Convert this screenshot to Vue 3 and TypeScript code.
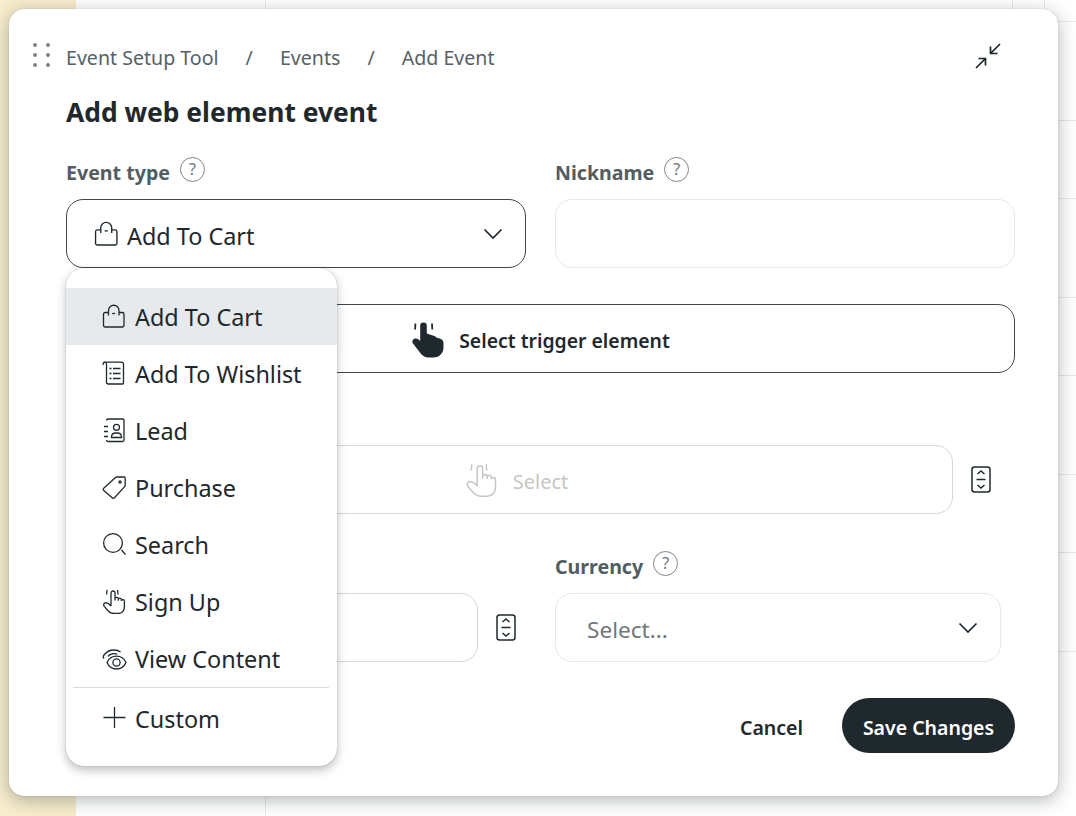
<script setup lang="ts">
interface IconDef { paths: string[]; dots?: [number, number, number][] }

const icons: Record<string, IconDef> = {
  bag: { paths: [
    'M6.5 8.5H3.2A1.7 1.7 0 0 0 1.5 10.2V21.3A1.7 1.7 0 0 0 3.2 23H20.3A1.7 1.7 0 0 0 22 21.3V10.2A1.7 1.7 0 0 0 20.3 8.5H17',
    'M6.5 11.5V6.5a5.2 5.2 0 0 1 10.5 0v5',
    'M10.2 9.5h3'
  ] },
  list: { paths: [
    'M1.5 1.2H19.5A2 2 0 0 1 21.5 3.2V22a1 1 0 0 1-1 1H6.5a2 2 0 0 1-2-2V3.2A2 2 0 0 0 2.6 1.2a1.6 1.6 0 0 0-1.1 2.6',
    'M11 7.5h7.5M11 12.5h7.5M11 17.5h7.5',
    'M7.5 7.5h2M7.5 12.5h2M7.5 17.5h2'
  ] },
  lead: { paths: [
    'M4.5 2.5a1.5 1.5 0 0 1 1.5-1.5H20.5a1.5 1.5 0 0 1 1.5 1.5V22a1.5 1.5 0 0 1-1.5 1.5H6a1.5 1.5 0 0 1-1.5-1.5',
    'M2 8.5h4M2 13.5h4M2 18.5h4',
    'M9.5 19.5v-1.2a4 4 0 0 1 4-3.3h2a4 4 0 0 1 4 3.3v1.2z'
  ], dots: [[14.5, 9.3, 3]] },
  tag: { paths: [
    'M1.7 13.2 13.5 2.6A2 2 0 0 1 14.9 2H22.2a1 1 0 0 1 1 1V10.2a2 2 0 0 1-.6 1.4L12.5 22.8a1.5 1.5 0 0 1-2.1.1L1.6 15.3a1.4 1.4 0 0 1 .1-2.1z'
  ], dots: [[18, 7, 1.1]] },
  search: { paths: ['M19.5 18 23.5 22.5'], dots: [[11, 11, 9.4]] },
  hand: { paths: [
    'M5 1 4.6 5.5M15.6 1 16 5.5',
    'M9 17V4a2 2 0 0 1 4 0V11.5M13 11.5V9.7a1.7 1.7 0 0 1 3.3 0v2M16.3 11.7V10.3a1.6 1.6 0 0 1 3.1 0V11.8M19.4 12a1.5 1.5 0 0 1 3 .2V18c0 3.5-2.6 6.5-6 6.5H12c-2.6 0-4.3-1-6-2.8L2.3 17.4c-1.3-1.6-.5-3.3 1-3.6 1.6-.3 4.1 1.2 5.7 3.2'
  ] },
  eye: { paths: [
    'M5 16.5C7 12 10 10.2 14.5 10.2S22 12 24 16.5C22 21 19 23 14.5 23S7 21 5 16.5z',
    'M2.2 12.5C.9 11.6.9 10.4 2 9 4.6 5.6 8 4 12 4c2.6 0 4.7.7 6.6 2',
    'M6 10.5C7.2 8.7 9.5 7.6 12 7.6c1.2 0 2.3.2 3.2.6'
  ], dots: [[14.5, 16.5, 3.6]] },
  plus: { paths: ['M12.5 1V22M1.5 11.5H23.5'] }
}

const menu = [
  { label: 'Add To Cart', icon: 'bag', active: true },
  { label: 'Add To Wishlist', icon: 'list', active: false },
  { label: 'Lead', icon: 'lead', active: false },
  { label: 'Purchase', icon: 'tag', active: false },
  { label: 'Search', icon: 'search', active: false },
  { label: 'Sign Up', icon: 'hand', active: false },
  { label: 'View Content', icon: 'eye', active: false }
]
</script>

<template>
  <div class="page">
    <section class="modal">
      <div class="crumbs-row">
        <span class="grip" aria-hidden="true"><i></i><i></i><i></i><i></i><i></i><i></i></span>
        <nav class="crumbs">
          <span>Event Setup Tool</span><span class="sep">/</span><span>Events</span><span class="sep">/</span><span>Add Event</span>
        </nav>
        <svg class="collapse" viewBox="0 0 26 26" fill="none" stroke="#1f282c" stroke-width="1.7">
          <path d="M25 1 15.5 10.5M15.5 3.5V10.5H22.5" />
          <path d="M1 25 10.5 15.5M3.5 15.5H10.5V22.5" />
        </svg>
      </div>

      <h1>Add web element event</h1>

      <div class="two first">
        <div class="field">
          <div class="label">Event type <span class="help">?</span></div>
          <div class="box dark select">
            <svg class="ic" viewBox="0 0 24 24" fill="none" stroke="#1f282c" stroke-width="1.3">
              <path v-for="d in icons.bag.paths" :key="d" :d="d" />
            </svg>
            <span class="value low">Add To Cart</span>
            <svg class="chev" viewBox="0 0 20 12" fill="none" stroke="#1f282c" stroke-width="1.7"><path d="M1.5 1.5 10 10l8.5-8.500" /></svg>
          </div>
        </div>
        <div class="field">
          <div class="label">Nickname <span class="help">?</span></div>
          <div class="box"></div>
        </div>
      </div>

      <button class="box dark trigger" type="button">
        <svg class="hand-solid" viewBox="0 0 34 38">
          <path fill="#1f282c" d="M9.2 5.7a3.3 3.3 0 0 1 6.6 0V13.5l6 2c1.5.3 3 1 4 2.2l3 .8c2.500.7 3.700 2.500 3.700 5v3.800c0 6-4 10.200-10 10.200h-5c-3.500 0-6-1.500-8-4.200L2 23.500c-1.300-1.800-.7-3.800 1-4.600 1.800-.9 4-.2 6.200 2z" />
          <path fill="none" stroke="#1f282c" stroke-width="1.8" d="M4.400 3.500 4.100 9.500M21 3.500 21.300 9.500" />
        </svg>
        <span class="low">Select trigger element</span>
      </button>

      <div class="stepper-row second">
        <div class="box disabled">
          <svg class="hand-line" viewBox="0 0 25 25" fill="none" stroke="#c4c6c7" stroke-width="1.1">
            <path v-for="d in icons.hand.paths" :key="d" :d="d" />
          </svg>
          <span class="low">Select</span>
        </div>
        <svg class="stepper" viewBox="0 0 20 27" fill="none" stroke="#1f282c" stroke-width="1.5">
          <rect x="1" y="1" width="18" height="25" rx="2.5" />
          <path d="M6.5 8 10 5l3.500 3M5.500 13.500h9M6.500 19l3.500 3 3.500-3" />
        </svg>
      </div>

      <div class="two third">
        <div class="stepper-field">
          <div class="stepper-row">
            <div class="box grow"></div>
            <svg class="stepper" viewBox="0 0 20 27" fill="none" stroke="#1f282c" stroke-width="1.5">
              <rect x="1" y="1" width="18" height="25" rx="2.5" />
              <path d="M6.5 8 10 5l3.500 3M5.500 13.500h9M6.500 19l3.500 3 3.500-3" />
            </svg>
          </div>
        </div>
        <div class="field currency">
          <div class="label">Currency <span class="help">?</span></div>
          <div class="box select placeholder">
            <span class="low">Select...</span>
            <svg class="chev" viewBox="0 0 20 12" fill="none" stroke="#1f282c" stroke-width="1.7"><path d="M1.5 1.5 10 10l8.500-8.500" /></svg>
          </div>
        </div>
      </div>

      <div class="actions">
        <button class="cancel" type="button"><span class="low">Cancel</span></button>
        <button class="save" type="button"><span class="low">Save Changes</span></button>
      </div>

      <div class="dropdown">
        <div v-for="item in menu" :key="item.label" class="item" :class="{ active: item.active }">
          <svg class="ic" viewBox="0 0 25 25" fill="none" stroke="#1f282c" stroke-width="1.3">
            <path v-for="d in icons[item.icon].paths" :key="d" :d="d" />
            <circle v-for="c in icons[item.icon].dots || []" :key="c[0]" :cx="c[0]" :cy="c[1]" :r="c[2]" />
          </svg>
          <span>{{ item.label }}</span>
        </div>
        <div class="divider"></div>
        <div class="item custom">
          <svg class="ic" viewBox="0 0 25 25" fill="none" stroke="#1f282c" stroke-width="1.3">
            <path v-for="d in icons.plus.paths" :key="d" :d="d" />
          </svg>
          <span>Custom</span>
        </div>
      </div>
    </section>
  </div>
</template>

<style scoped>
.page {
  position: relative;
  width: 1076px;
  height: 816px;
  overflow: hidden;
  font-family: "Noto Sans", "Open Sans", sans-serif;
  color: #1f282c;
  background-color: #fff;
  background-repeat: no-repeat;
  background-image:
    linear-gradient(#f8edcd, #f8edcd),
    linear-gradient(#e7e9eb, #e7e9eb),
    linear-gradient(#e7e9eb, #e7e9eb),
    linear-gradient(#e7e9eb, #e7e9eb),
    linear-gradient(#e7e9eb, #e7e9eb),
    linear-gradient(#e7e9eb, #e7e9eb),
    linear-gradient(#e7e9eb, #e7e9eb),
    linear-gradient(#e7e9eb, #e7e9eb),
    linear-gradient(#e7e9eb, #e7e9eb),
    linear-gradient(#e7e9eb, #e7e9eb),
    linear-gradient(#e7e9eb, #e7e9eb),
    linear-gradient(#e7e9eb, #e7e9eb);
  background-size:
    76px 816px, 1px 816px, 1px 21px, 1px 21px,
    1000px 1px, 1000px 1px, 1000px 1px, 1000px 1px, 1000px 1px, 1000px 1px, 1000px 1px, 1000px 1px;
  background-position:
    0 0, 265px 0, 1012px 0, 1044px 0,
    76px 21px, 76px 120px, 76px 198px, 76px 297px, 76px 375px, 76px 474px, 76px 552px, 76px 651px;
}

.modal {
  position: absolute;
  left: 9px;
  top: 9px;
  box-sizing: border-box;
  width: 1049px;
  height: 787px;
  padding: 0 43px 0 57px;
  background: #fff;
  border-radius: 15px;
  box-shadow: 0 0 1px rgba(30, 40, 45, 0.35), 0 4px 18px rgba(30, 40, 45, 0.34);
}

.crumbs-row {
  display: flex;
  align-items: center;
  height: 30px;
  margin-top: 33px;
}
.grip {
  display: grid;
  grid-template-columns: 4px 4px;
  gap: 6px 9px;
  margin-left: -33px;
  margin-right: 16px;
  margin-top: -4px;
}
.grip i {
  width: 4px;
  height: 4px;
  border-radius: 50%;
  background: #7d8487;
}
.crumbs {
  display: flex;
  font-size: 19.6px;
  color: #566166;
}
.sep { margin: 0 27px; }
.collapse {
  width: 26px;
  height: 26px;
  margin-left: auto;
  margin-right: 14px;
  margin-top: -3px;
}

h1 {
  margin: 21px 0 0;
  font-size: 26.4px;
  line-height: 38px;
  font-weight: 700;
  color: #1f282c;
}

.two {
  display: grid;
  grid-template-columns: 460px 460px;
  gap: 29px;
}
.first { margin-top: 24px; }
.label {
  display: flex;
  align-items: center;
  gap: 10px;
  height: 34px;
  margin-bottom: 10px;
  font-size: 19.6px;
  font-weight: 700;
  color: #525d62;
}
.help {
  display: inline-flex;
  align-items: center;
  justify-content: center;
  box-sizing: border-box;
  width: 25px;
  height: 25px;
  border: 1.5px solid #7f878a;
  border-radius: 50%;
  font-size: 16px;
  font-weight: 400;
  color: #6e777a;
  margin-top: -6px;
}

.box {
  box-sizing: border-box;
  display: flex;
  align-items: center;
  height: 69px;
  border: 1px solid #e6e8e9;
  border-radius: 17px;
  background: #fff;
}
.dark { border: 1px solid #3f484c; }
.select {
  padding: 0 22px 0 27px;
  font-size: 23.4px;
}
.select .ic { margin-right: 8px; }
.value { color: #1f282c; }
.chev {
  width: 20px;
  height: 12px;
  margin-left: auto;
}
.ic {
  flex: none;
  width: 25px;
  height: 25px;
}
.low { position: relative; top: 2px; }

.trigger {
  width: 100%;
  margin-top: 36px;
  padding: 0;
  justify-content: center;
  gap: 14px;
  font: 600 19.4px "Noto Sans", "Open Sans", sans-serif;
  color: #1f282c;
}
.hand-solid {
  width: 34px;
  height: 38px;
}

.stepper-row {
  display: flex;
  align-items: center;
  gap: 18px;
}
.second {
  margin-top: 72px;
  margin-left: 14px;
  margin-right: 24px;
}
.second .box {
  flex: 1;
  justify-content: center;
  gap: 14px;
  font-size: 20px;
  color: #c4c6c7;
  border-color: #d6d8d9;
}
.hand-line {
  width: 34px;
  height: 36px;
}
.stepper {
  flex: none;
  width: 20px;
  height: 27px;
}
.third { margin-top: 35px; }
.stepper-field { padding-top: 44px; margin-right: 10px; }
.grow { flex: 1; border-color: #d6d8d9; }
.currency { margin-right: 14px; }
.placeholder { color: #6e777a; padding-left: 31px; font-size: 22.6px; }

.actions {
  display: flex;
  justify-content: flex-end;
  align-items: center;
  gap: 39px;
  margin-top: 36px;
}
.actions button {
  border: 0;
  padding: 0;
  font: 600 19.5px "Noto Sans", "Open Sans", sans-serif;
}
.cancel { background: none; color: #1f282c; }
.actions .save {
  width: 173px;
  height: 55px;
  border-radius: 28px;
  background: #1f282c;
  color: #fff;
}

.dropdown {
  position: absolute;
  left: 57px;
  top: 259px;
  box-sizing: border-box;
  width: 271px;
  height: 498px;
  padding-top: 20px;
  background: #fff;
  border-radius: 18px;
  box-shadow: 0 0 1px rgba(30, 40, 45, 0.4), 0 4px 10px rgba(30, 40, 45, 0.3);
}
.item {
  display: flex;
  align-items: center;
  gap: 8px;
  height: 57px;
  padding-left: 36px;
  font-size: 23.4px;
  color: #1f282c;
}
.item.active { background: #e6eaed; }
.divider {
  height: 1px;
  margin: 0 8px 0 7px;
  background: #d9dcde;
}
.custom { height: 61px; }
</style>
